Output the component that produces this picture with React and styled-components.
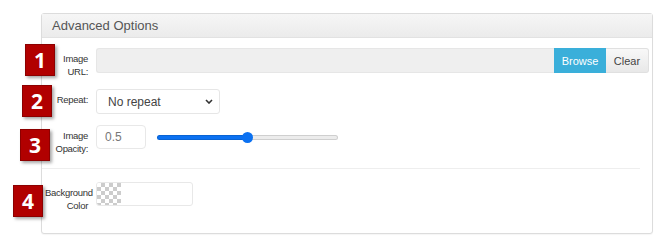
import styled, { createGlobalStyle } from "styled-components";

const GlobalStyle = createGlobalStyle`
  html, body {
    margin: 0;
    padding: 0;
    background: #ffffff;
    font-family: "Liberation Sans", Arial, sans-serif;
  }
`;

const badges = [
  { n: 1, x: 25, y: 44 },
  { n: 2, x: 22, y: 85 },
  { n: 3, x: 20, y: 129 },
  { n: 4, x: 13, y: 185 },
];

const App = () => {
  return (
    <Page>
      <GlobalStyle />
      <Panel>
        <PanelHeader>Advanced Options</PanelHeader>
        <PanelBody>
          <Row $mb={11}>
            <Label>Image URL:</Label>
            <InputGroup>
              <UrlInput type="text" disabled />
              <BrowseButton>Browse</BrowseButton>
              <ClearButton>Clear</ClearButton>
            </InputGroup>
          </Row>
          <Row $mb={11}>
            <Label>Repeat:</Label>
            <SelectBox>
              <span>No repeat</span>
              <svg width="8" height="5" viewBox="0 0 8 5">
                <path
                  d="M1 1l3 3 3-3"
                  fill="none"
                  stroke="#333"
                  strokeWidth="1.6"
                />
              </svg>
            </SelectBox>
          </Row>
          <Row $mb={0}>
            <Label>Image Opacity:</Label>
            <OpacityControls>
              <SmallInput defaultValue="0.5" />
              <Range type="range" min="0" max="1" step="0.01" defaultValue="0.5" />
            </OpacityControls>
          </Row>
          <Divider />
          <Row $mb={0}>
            <Label>Background Color</Label>
            <ColorInput>
              <Swatch />
            </ColorInput>
          </Row>
        </PanelBody>
      </Panel>
      {badges.map((b) => (
        <Badge key={b.n} style={{ left: b.x, top: b.y }}>
          {b.n}
        </Badge>
      ))}
    </Page>
  );
};
export default App;

const Page = styled.div`
  position: relative;
  width: 659px;
  height: 240px;
  padding: 13px 0 0 41px;
  box-sizing: border-box;
`;

const Panel = styled.section`
  width: 612px;
  height: 221px;
  box-sizing: border-box;
  border: 1px solid #dcdcdc;
  border-radius: 3px;
  background: #ffffff;
  box-shadow: 0 1px 1px rgba(0, 0, 0, 0.04);
`;

const PanelHeader = styled.div`
  height: 23px;
  padding-left: 10px;
  display: flex;
  align-items: center;
  background: linear-gradient(#f6f6f6, #ebebeb);
  border-bottom: 1px solid #e2e2e2;
  color: #555555;
  font-size: 13px;
`;

const PanelBody = styled.div`
  padding: 10px 3px 0 3px;
`;

const Row = styled.div`
  display: grid;
  grid-template-columns: 43px 1fr;
  column-gap: 8px;
  align-items: start;
  margin-bottom: ${(p) => p.$mb}px;
`;

const Label = styled.div`
  padding-top: 4px;
  text-align: right;
  font-size: 9.5px;
  letter-spacing: -0.3px;
  line-height: 13px;
  color: #333333;
`;

const InputGroup = styled.div`
  display: flex;
  height: 25px;
`;

const UrlInput = styled.input`
  flex: 1;
  min-width: 0;
  margin: 0;
  border: 1px solid #e6e6e6;
  border-right: none;
  border-radius: 3px 0 0 3px;
  background: #efefef;
  box-sizing: border-box;
`;

const BrowseButton = styled.button`
  width: 52px;
  margin: 0;
  border: none;
  background: #3aafda;
  color: #ffffff;
  font-family: "Liberation Sans", Arial, sans-serif;
  font-size: 11px;
  padding: 0;
`;

const ClearButton = styled.button`
  width: 43px;
  margin: 0;
  border: 1px solid #e0e0e0;
  border-left: none;
  border-radius: 0 3px 3px 0;
  background: linear-gradient(#f8f8f8, #e8e8e8);
  color: #444444;
  font-family: "Liberation Sans", Arial, sans-serif;
  font-size: 11px;
  padding: 0;
`;

const SelectBox = styled.div`
  width: 124px;
  height: 25px;
  box-sizing: border-box;
  border: 1px solid #e6e6e6;
  border-radius: 3px;
  display: flex;
  align-items: center;
  justify-content: space-between;
  padding: 0 6px 0 11px;
  font-size: 12px;
  color: #444444;
`;

const OpacityControls = styled.div`
  display: flex;
  align-items: center;
  gap: 11px;
`;

const SmallInput = styled.input`
  width: 50px;
  height: 24px;
  box-sizing: border-box;
  margin: 0;
  border: 1px solid #e8e8e8;
  border-radius: 4px;
  padding: 0 8px;
  font-family: "Liberation Sans", Arial, sans-serif;
  font-size: 12px;
  color: #777777;
  outline: none;
`;

const Range = styled.input`
  -webkit-appearance: none;
  appearance: none;
  width: 181px;
  height: 12px;
  margin: 0;
  background: transparent;

  &::-webkit-slider-runnable-track {
    height: 5px;
    border-radius: 3px;
    background: linear-gradient(to right, #0b71f1 50%, #ececec 50%);
    box-shadow: inset 0 0 0 1px rgba(0, 0, 0, 0.12);
  }

  &::-webkit-slider-thumb {
    -webkit-appearance: none;
    width: 11px;
    height: 11px;
    margin-top: -3px;
    border-radius: 50%;
    background: #0b71f1;
    border: none;
  }
`;

const Divider = styled.hr`
  margin: 13px 9px 13px -3px;
  border: none;
  border-top: 1px solid #eeeeee;
`;

const ColorInput = styled.div`
  width: 97px;
  height: 24px;
  box-sizing: border-box;
  border: 1px solid #e8e8e8;
  border-radius: 3px;
  overflow: hidden;
  display: flex;
`;

const Swatch = styled.div`
  width: 24px;
  height: 100%;
  background-color: #ffffff;
  background-image: linear-gradient(45deg, #cccccc 25%, transparent 25%, transparent 75%, #cccccc 75%),
    linear-gradient(45deg, #cccccc 25%, transparent 25%, transparent 75%, #cccccc 75%);
  background-size: 8px 8px;
  background-position: 0 0, 4px 4px;
`;

const Badge = styled.div`
  position: absolute;
  width: 30px;
  height: 32px;
  display: flex;
  align-items: center;
  justify-content: center;
  background: #b10000;
  border: 1px solid #8c0000;
  box-sizing: border-box;
  box-shadow: 2px 2px 3px rgba(0, 0, 0, 0.35);
  color: #ffffff;
  font-family: "Open Sans", "Liberation Sans", sans-serif;
  font-weight: 700;
  font-size: 21px;
`;
